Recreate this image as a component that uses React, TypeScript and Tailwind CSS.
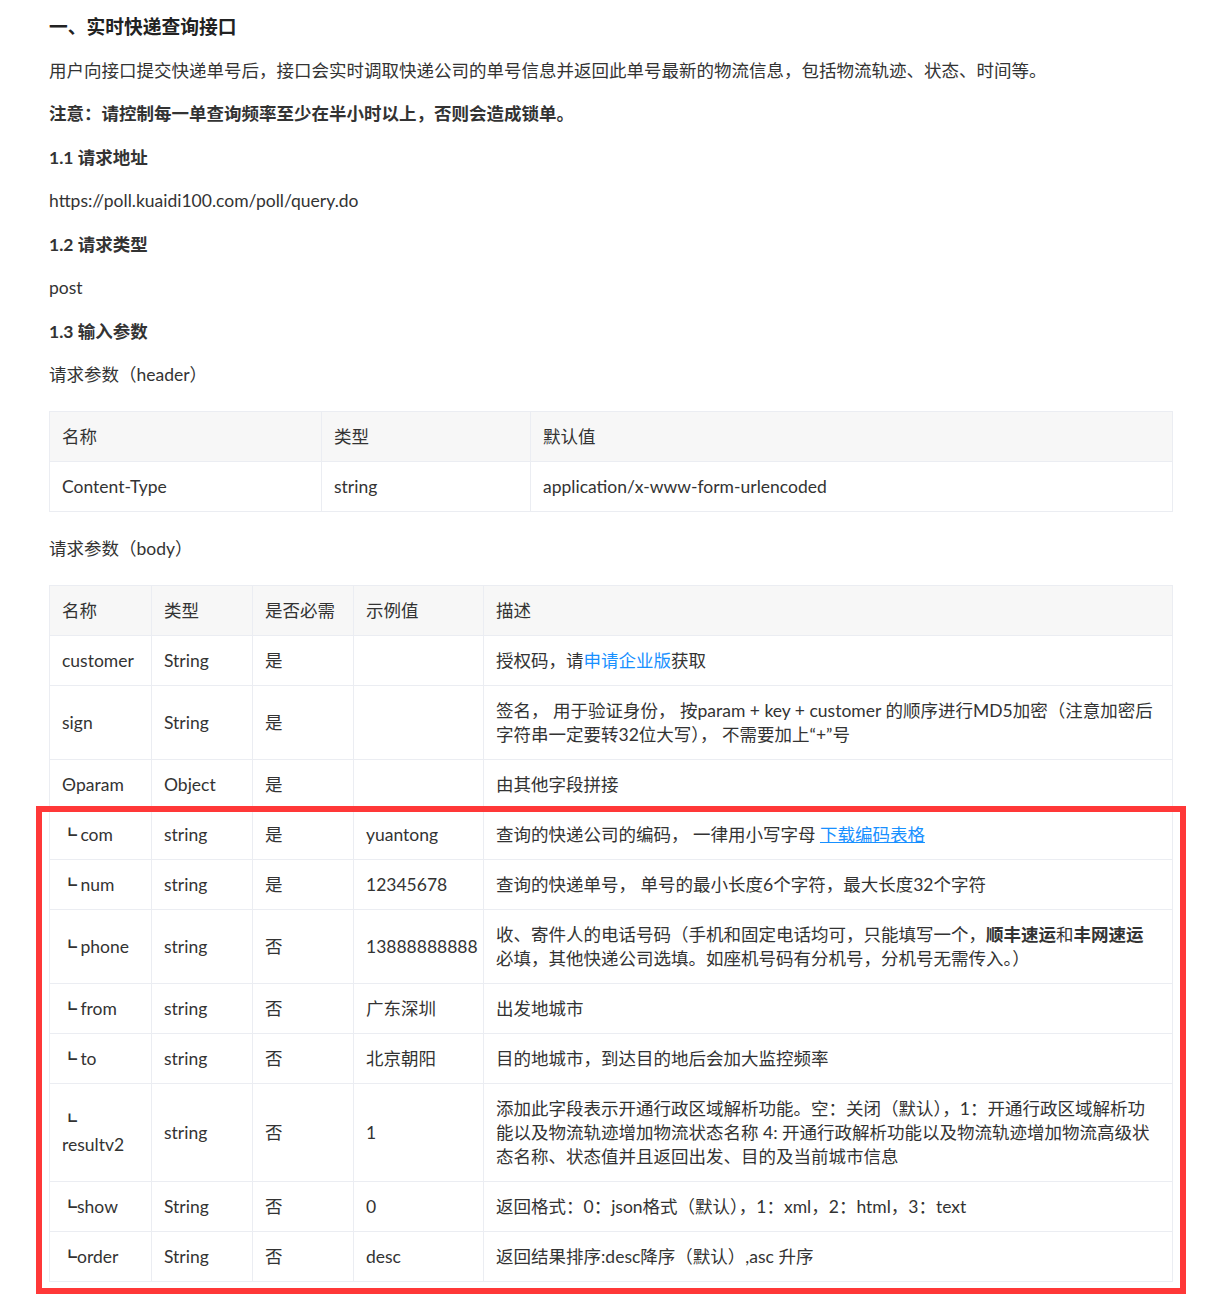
import type { ReactNode } from "react";

type Row = {
  name: ReactNode;
  type: string;
  required: string;
  example: string;
  desc: ReactNode;
};

const L = ({ space = true }: { space?: boolean }) => (
  <span className="font-['Noto_Sans_CJK_SC',sans-serif] text-[15px] leading-none">┗{space ? " " : ""}</span>
);

const bodyRows: Row[] = [
  {
    name: "customer",
    type: "String",
    required: "是",
    example: "",
    desc: (
      <>
        授权码，请<a className="text-[#1890ff]">申请企业版</a>获取
      </>
    ),
  },
  {
    name: "sign",
    type: "String",
    required: "是",
    example: "",
    desc: "签名， 用于验证身份， 按param + key + customer 的顺序进行MD5加密（注意加密后字符串一定要转32位大写）， 不需要加上“+”号",
  },
  { name: "Θparam", type: "Object", required: "是", example: "", desc: "由其他字段拼接" },
  {
    name: (
      <>
        <L />com
      </>
    ),
    type: "string",
    required: "是",
    example: "yuantong",
    desc: (
      <>
        查询的快递公司的编码， 一律用小写字母{" "}
        <a className="text-[#1890ff] underline">下载编码表格</a>
      </>
    ),
  },
  {
    name: (
      <>
        <L />num
      </>
    ),
    type: "string",
    required: "是",
    example: "12345678",
    desc: "查询的快递单号， 单号的最小长度6个字符，最大长度32个字符",
  },
  {
    name: (
      <>
        <L />phone
      </>
    ),
    type: "string",
    required: "否",
    example: "13888888888",
    desc: (
      <>
        收、寄件人的电话号码（手机和固定电话均可，只能填写一个，<b>顺丰速运</b>和<b>丰网速运</b>
        必填，其他快递公司选填。如座机号码有分机号，分机号无需传入。）
      </>
    ),
  },
  {
    name: (
      <>
        <L />from
      </>
    ),
    type: "string",
    required: "否",
    example: "广东深圳",
    desc: "出发地城市",
  },
  {
    name: (
      <>
        <L />to
      </>
    ),
    type: "string",
    required: "否",
    example: "北京朝阳",
    desc: "目的地城市，到达目的地后会加大监控频率",
  },
  {
    name: (
      <>
        <L />resultv2
      </>
    ),
    type: "string",
    required: "否",
    example: "1",
    desc: "添加此字段表示开通行政区域解析功能。空：关闭（默认），1：开通行政区域解析功能以及物流轨迹增加物流状态名称 4: 开通行政解析功能以及物流轨迹增加物流高级状态名称、状态值并且返回出发、目的及当前城市信息",
  },
  {
    name: (
      <>
        <L space={false} />show
      </>
    ),
    type: "String",
    required: "否",
    example: "0",
    desc: "返回格式：0：json格式（默认），1：xml，2：html，3：text",
  },
  {
    name: (
      <>
        <L space={false} />order
      </>
    ),
    type: "String",
    required: "否",
    example: "desc",
    desc: "返回结果排序:desc降序（默认）,asc 升序",
  },
];

const cell = "border border-[#ebedf2] px-[12px] py-[12.5px] text-left align-middle font-normal leading-[24px]";

export default function App() {
  return (
    <div className="relative min-h-[1295px] bg-white font-['Lato','Noto_Sans_CJK_SC',sans-serif] text-[17.5px] text-[#333]">
      <div className="pl-[49px] pr-[57px] pt-[14px]">
        <h2 className="mb-[17.5px] text-[18.75px] font-bold leading-[26px] text-[#222]">一、实时快递查询接口</h2>
        <p className="mb-[17.5px] leading-[26px]">
          用户向接口提交快递单号后，接口会实时调取快递公司的单号信息并返回此单号最新的物流信息，包括物流轨迹、状态、时间等。
        </p>
        <p className="mb-[17.5px] font-bold leading-[26px]">注意：请控制每一单查询频率至少在半小时以上，否则会造成锁单。</p>
        <h3 className="mb-[17.5px] font-bold leading-[26px]">1.1 请求地址</h3>
        <p className="mb-[17.5px] leading-[26px]">https://poll.kuaidi100.com/poll/query.do</p>
        <h3 className="mb-[17.5px] font-bold leading-[26px]">1.2 请求类型</h3>
        <p className="mb-[17.5px] leading-[26px]">post</p>
        <h3 className="mb-[17.5px] font-bold leading-[26px]">1.3 输入参数</h3>
        <p className="mb-[23px] leading-[26px]">请求参数（header）</p>

        <table className="w-full table-fixed border-collapse">
          <colgroup>
            <col className="w-[272px]" />
            <col className="w-[209px]" />
            <col />
          </colgroup>
          <thead>
            <tr className="bg-[#f7f7f7]">
              <th className={cell}>名称</th>
              <th className={cell}>类型</th>
              <th className={cell}>默认值</th>
            </tr>
          </thead>
          <tbody>
            <tr>
              <td className={cell}>Content-Type</td>
              <td className={cell}>string</td>
              <td className={cell}>application/x-www-form-urlencoded</td>
            </tr>
          </tbody>
        </table>

        <p className="mb-[23px] mt-[24px] leading-[26px]">请求参数（body）</p>

        <table className="w-full table-fixed border-collapse">
          <colgroup>
            <col className="w-[102px]" />
            <col className="w-[101px]" />
            <col className="w-[101px]" />
            <col className="w-[130px]" />
            <col />
          </colgroup>
          <thead>
            <tr className="bg-[#f7f7f7]">
              <th className={cell}>名称</th>
              <th className={cell}>类型</th>
              <th className={cell}>是否必需</th>
              <th className={cell}>示例值</th>
              <th className={cell}>描述</th>
            </tr>
          </thead>
          <tbody>
            {bodyRows.map((r, i) => (
              <tr key={i}>
                <td className={cell}>{r.name}</td>
                <td className={cell}>{r.type}</td>
                <td className={cell}>{r.required}</td>
                <td className={cell}>{r.example}</td>
                <td className={cell}>{r.desc}</td>
              </tr>
            ))}
          </tbody>
        </table>
      </div>

      {/* red annotation frame */}
      <div className="pointer-events-none absolute left-[36px] top-[806px] h-[488px] w-[1150px] border-[6px] border-[#ff3838]" />
    </div>
  );
}
